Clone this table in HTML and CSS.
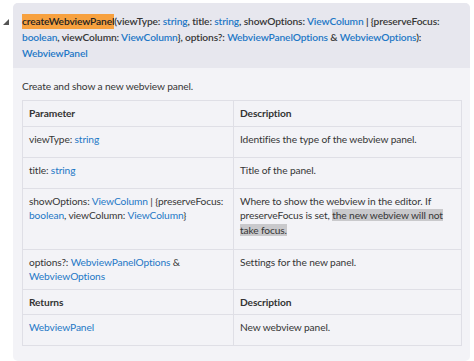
FILE: index.html
```html
<!DOCTYPE html>
<html lang="en">
<head>
  <meta charset="UTF-8" />
  <title>createWebviewPanel</title>
  <link rel="stylesheet" href="styles.css">
</head>
<body>
  <div class="member">
    <div class="twisty">
      <svg width="6" height="6" viewBox="0 0 6 6"><polygon points="6,0 6,6 0,6" fill="#555"/></svg>
    </div>
    <div class="card">
      <div class="signature">
        <span class="hit">createWebviewPanel</span>(viewType: <a href="#">string</a>, title: <a href="#">string</a>, showOptions: <a href="#">ViewColumn</a> | {preserveFocus:<br>
        <a href="#">boolean</a>, viewColumn: <a href="#">ViewColumn</a>}, options?: <a href="#">WebviewPanelOptions</a> &amp; <a href="#">WebviewOptions</a>):<br>
        <a href="#">WebviewPanel</a>
      </div>
      <div class="details">
        <p class="summary">Create and show a new webview panel.</p>
        <table class="params">
          <tr class="head">
            <th class="col-name">Parameter</th>
            <th>Description</th>
          </tr>
          <tr class="row">
            <td>viewType: <a href="#">string</a></td>
            <td>Identifies the type of the webview panel.</td>
          </tr>
          <tr class="row">
            <td>title: <a href="#">string</a></td>
            <td>Title of the panel.</td>
          </tr>
          <tr class="row tall">
            <td>showOptions: <a href="#">ViewColumn</a> | {preserveFocus: <a href="#">boolean</a>, viewColumn: <a href="#">ViewColumn</a>}</td>
            <td>Where to show the webview in the editor. If preserveFocus is set, <span class="sel">the new webview will not take focus.</span></td>
          </tr>
          <tr class="row mid">
            <td>options?: <a href="#">WebviewPanelOptions</a> &amp; <a href="#">WebviewOptions</a></td>
            <td>Settings for the new panel.</td>
          </tr>
          <tr class="head">
            <th>Returns</th>
            <th>Description</th>
          </tr>
          <tr class="row">
            <td><a href="#">WebviewPanel</a></td>
            <td>New webview panel.</td>
          </tr>
        </table>
      </div>
    </div>
  </div>
</body>
</html>
```

FILE: styles.css
```css
* {
  box-sizing: border-box;
}

body {
  margin: 0;
  background-color: white;
  color: #363636;
  font-family: 'Lato', 'Open Sans', sans-serif;
  font-size: 10.2px;
  letter-spacing: -0.12px;
}

a {
  color: #1e78c6;
  text-decoration: none;
}

.member {
  display: flex;
  padding: 3px 4px 6px 0;
}

.twisty {
  width: 13px;
  padding: 16px 0 0 3px;
}

.twisty svg {
  display: block;
}

.card {
  flex: 1;
  border-radius: 5px;
  overflow: hidden;
  background-color: #f3f3f7;
}

.signature {
  background-color: #e7e7ee;
  padding: 10px 9px 7px 9px;
  font-size: 10.2px;
  font-weight: 600;
  line-height: 16px;
  color: #363636;
  white-space: nowrap;
}

.hit {
  background-color: #f7a13f;
  color: #222;
  padding: 1px 0 2px;
}

.details {
  padding: 11px 8px 15px 9px;
}

.summary {
  margin: 0 0 7px 0;
  line-height: 14px;
}

.params {
  width: 100%;
  border-collapse: collapse;
  line-height: 14.5px;
}

.params th,
.params td {
  border: 1px solid #dfdfe6;
  padding: 5px 5px 5px 6px;
  text-align: left;
  vertical-align: top;
}

.params th {
  font-weight: 700;
  color: #333;
}

.col-name {
  width: 211px;
}

.head { height: 25px; }
.row { height: 31px; }
.row.tall { height: 61px; }
.row.mid { height: 37px; }

.sel {
  background-color: #c9c9cc;
}
```
